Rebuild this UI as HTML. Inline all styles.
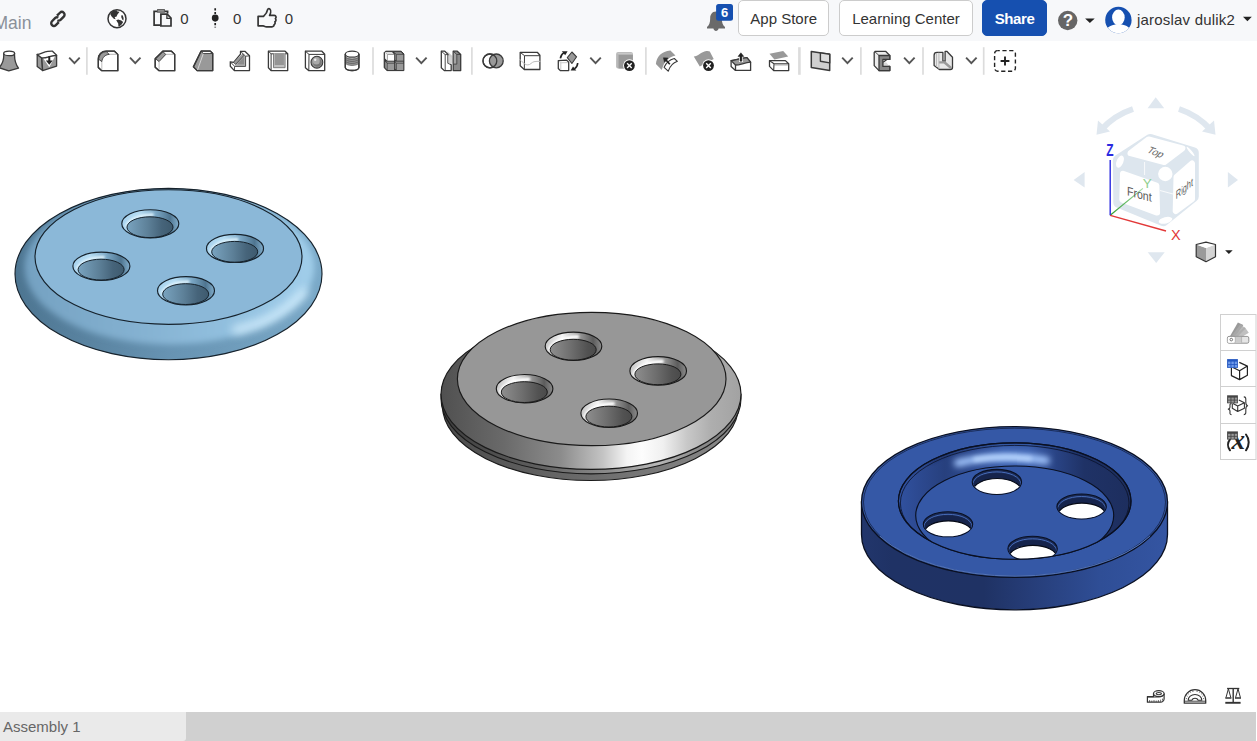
<!DOCTYPE html>
<html><head><meta charset="utf-8">
<style>
html,body{margin:0;padding:0;}
body{width:1257px;height:741px;overflow:hidden;background:#fff;font-family:"Liberation Sans",sans-serif;position:relative;}
#hdr{position:absolute;left:0;top:0;width:1257px;height:41px;background:#f7f8fa;}
#tb{position:absolute;left:0;top:41px;width:1257px;height:40px;background:#fff;}
#bot{position:absolute;left:0;top:712px;width:1256px;height:29px;background:#d0d0d0;}
#tab{position:absolute;left:0;top:0;width:186px;height:29px;background:#eaeaea;border-bottom-right-radius:3px;}
#tab span{position:absolute;left:3px;top:6px;font-size:15px;color:#666;}
.t{position:absolute;white-space:nowrap;}
.btn{position:absolute;box-sizing:border-box;border:1px solid #ccc;border-radius:5px;background:#fff;color:#333;font-size:15px;text-align:center;}
svg{position:absolute;left:0;top:0;}
</style></head><body>
<div id="hdr"></div>
<div id="tb"></div>
<!--SCENE--><svg width="1257" height="741" viewBox="0 0 1257 741">
<defs>
<filter id="bl3" filterUnits="userSpaceOnUse" x="0" y="80" width="1257" height="640"><feGaussianBlur stdDeviation="3"/></filter>
<filter id="bl2" filterUnits="userSpaceOnUse" x="0" y="80" width="1257" height="640"><feGaussianBlur stdDeviation="2"/></filter>
<filter id="bl1" filterUnits="userSpaceOnUse" x="-40" y="-25" width="80" height="50"><feGaussianBlur stdDeviation="1"/></filter>
<filter id="bl5" filterUnits="userSpaceOnUse" x="0" y="80" width="1257" height="640"><feGaussianBlur stdDeviation="5"/></filter>
<linearGradient id="lbOut" x1="15" y1="0" x2="322" y2="0" gradientUnits="userSpaceOnUse">
<stop offset="0" stop-color="#4d7591"/><stop offset="0.5" stop-color="#6793b2"/><stop offset="1" stop-color="#7aa9c8"/>
</linearGradient>
<linearGradient id="lbIn" x1="15" y1="0" x2="322" y2="0" gradientUnits="userSpaceOnUse">
<stop offset="0" stop-color="#73a0c0"/><stop offset="0.4" stop-color="#84b1d1"/><stop offset="0.7" stop-color="#92c0df"/><stop offset="1" stop-color="#a2cfeb"/>
</linearGradient>
<clipPath id="lbClip"><ellipse cx="168.5" cy="274" rx="153.5" ry="85.7"/></clipPath>
<linearGradient id="lbHole" x1="0" y1="0" x2="1" y2="0">
<stop offset="0" stop-color="#8fbcdb"/><stop offset="0.5" stop-color="#5f8aa8"/><stop offset="1" stop-color="#3f627d"/>
</linearGradient>

<linearGradient id="lbHoleIn" x1="-23" y1="0" x2="23" y2="0" gradientUnits="userSpaceOnUse">
<stop offset="0" stop-color="#79a3bf"/><stop offset="0.45" stop-color="#5d8098"/><stop offset="0.75" stop-color="#46647a"/><stop offset="1" stop-color="#3e5a6e"/>
</linearGradient>
<linearGradient id="lbHoleRim" x1="-28" y1="0" x2="28" y2="0" gradientUnits="userSpaceOnUse">
<stop offset="0" stop-color="#a9d3ee"/><stop offset="0.3" stop-color="#b5dcf3"/><stop offset="0.6" stop-color="#7ba7c5"/><stop offset="0.85" stop-color="#4f7590"/><stop offset="1" stop-color="#7fabc9"/>
</linearGradient>
<clipPath id="lbHoleClip"><ellipse cx="0" cy="0" rx="28.5" ry="14.1"/></clipPath>
<g id="lbHoleG">
<ellipse cx="0" cy="0" rx="28.5" ry="14.1" fill="url(#lbHoleRim)" stroke="#16222c" stroke-width="1.15"/>
<g clip-path="url(#lbHoleClip)"><path d="M-24,2 Q-18,-8 2,-9" fill="none" stroke="#dff3fd" stroke-width="3" stroke-linecap="round" filter="url(#bl1)"/></g>
<ellipse cx="-0.3" cy="3.4" rx="23" ry="10.4" fill="url(#lbHoleIn)" stroke="#16222c" stroke-width="1"/>
</g>

<linearGradient id="gCh" x1="441" y1="0" x2="741" y2="0" gradientUnits="userSpaceOnUse">
<stop offset="0" stop-color="#505050"/><stop offset="0.21" stop-color="#6a6a6a"/><stop offset="0.40" stop-color="#8c8c8c"/><stop offset="0.54" stop-color="#c4c4c4"/><stop offset="0.62" stop-color="#f4f4f4"/><stop offset="0.67" stop-color="#fdfdfd"/><stop offset="0.74" stop-color="#f0f0f0"/><stop offset="0.82" stop-color="#c8c8c8"/><stop offset="0.9" stop-color="#aeaeae"/><stop offset="1" stop-color="#a2a2a2"/>
</linearGradient>
<linearGradient id="gWall" x1="441" y1="0" x2="741" y2="0" gradientUnits="userSpaceOnUse">
<stop offset="0" stop-color="#3c3c3c"/><stop offset="0.3" stop-color="#5c5c5c"/><stop offset="0.55" stop-color="#8a8a8a"/><stop offset="0.72" stop-color="#b8b8b8"/><stop offset="0.85" stop-color="#8c8c8c"/><stop offset="1" stop-color="#7a7a7a"/>
</linearGradient>
<linearGradient id="gLow" x1="441" y1="0" x2="741" y2="0" gradientUnits="userSpaceOnUse">
<stop offset="0" stop-color="#4a4a4a"/><stop offset="0.4" stop-color="#666"/><stop offset="0.75" stop-color="#7c7c7c"/><stop offset="1" stop-color="#8a8a8a"/>
</linearGradient>
<linearGradient id="gHoleIn" x1="-23" y1="0" x2="23" y2="0" gradientUnits="userSpaceOnUse">
<stop offset="0" stop-color="#8e8e8e"/><stop offset="0.45" stop-color="#6e6e6e"/><stop offset="0.8" stop-color="#525252"/><stop offset="1" stop-color="#4a4a4a"/>
</linearGradient>
<linearGradient id="gHoleRim" x1="-28" y1="0" x2="28" y2="0" gradientUnits="userSpaceOnUse">
<stop offset="0" stop-color="#c8c8c8"/><stop offset="0.3" stop-color="#f4f4f4"/><stop offset="0.6" stop-color="#9a9a9a"/><stop offset="0.85" stop-color="#5c5c5c"/><stop offset="1" stop-color="#8a8a8a"/>
</linearGradient>
<g id="gHoleG">
<ellipse cx="0" cy="0" rx="28.3" ry="14.2" fill="url(#gHoleRim)" stroke="#1a1a1a" stroke-width="1.15"/>
<g clip-path="url(#lbHoleClip)"><path d="M-24,3 Q-18,-8 4,-9.5" fill="none" stroke="#ffffff" stroke-width="3.5" stroke-linecap="round" filter="url(#bl1)"/></g>
<ellipse cx="-0.3" cy="3.4" rx="23" ry="10.4" fill="url(#gHoleIn)" stroke="#1a1a1a" stroke-width="1"/>
</g>

<linearGradient id="bWall" x1="861" y1="0" x2="1168" y2="0" gradientUnits="userSpaceOnUse">
<stop offset="0" stop-color="#22366c"/><stop offset="0.1" stop-color="#1f3265"/><stop offset="0.4" stop-color="#1f3264"/><stop offset="0.55" stop-color="#263d78"/><stop offset="0.78" stop-color="#2f4e96"/><stop offset="1" stop-color="#3455a2"/>
</linearGradient>
<linearGradient id="bBowl" x1="898" y1="0" x2="1131" y2="0" gradientUnits="userSpaceOnUse">
<stop offset="0" stop-color="#3152a0"/><stop offset="0.08" stop-color="#2d4a92"/><stop offset="0.2" stop-color="#27407e"/><stop offset="0.32" stop-color="#2d4a90"/><stop offset="0.45" stop-color="#3a5eac"/><stop offset="0.56" stop-color="#3a5eac"/><stop offset="0.68" stop-color="#294384"/><stop offset="0.8" stop-color="#1f3266"/><stop offset="1" stop-color="#1d2e5e"/>
</linearGradient>
<clipPath id="bRecClip"><ellipse cx="1014.7" cy="501" rx="116.3" ry="58.2"/></clipPath>
<g id="bHoleG">
<ellipse cx="0" cy="0" rx="24.7" ry="12.5" fill="#1a2a56" stroke="#0a1022" stroke-width="1.1"/>
<clipPath id="bHoleClip"><ellipse cx="0" cy="0" rx="24.2" ry="12"/></clipPath>
<g clip-path="url(#bHoleClip)">
<ellipse cx="0" cy="1.6" rx="23.6" ry="11.6" fill="none" stroke="#4d74c4" stroke-width="1" opacity="0.9"/>
<ellipse cx="0" cy="3.4" rx="24" ry="12" fill="#16234a" stroke="none" opacity="0.85"/>
<ellipse cx="0.3" cy="9.2" rx="24.2" ry="12.6" fill="#ffffff" stroke="#060a16" stroke-width="1.2"/>
</g>
</g>
</defs>
<!-- light blue button -->
<g id="lb">
<ellipse cx="168.5" cy="274" rx="153.5" ry="85.7" fill="url(#lbOut)"/>
<g clip-path="url(#lbClip)">
<ellipse cx="169.5" cy="267" rx="145" ry="77.5" fill="url(#lbIn)" filter="url(#bl3)"/>
<path d="M236,330 Q277,322 304,292" fill="none" stroke="#d6effd" stroke-width="8" stroke-linecap="round" filter="url(#bl5)" opacity="0.95"/>
</g>
<ellipse cx="168.5" cy="274" rx="153.5" ry="85.7" fill="none" stroke="#16222c" stroke-width="1.15"/>
<ellipse cx="168.5" cy="257" rx="133.5" ry="67.3" fill="#8bb8d8" stroke="#16222c" stroke-width="1.15"/>
<use href="#lbHoleG" x="150.3" y="223.8"/>
<use href="#lbHoleG" x="235.0" y="248.4"/>
<use href="#lbHoleG" x="101.4" y="266.2"/>
<use href="#lbHoleG" x="186.0" y="290.7"/>
</g>
<!-- gray button -->
<g id="gb">
<ellipse cx="590.5" cy="406" rx="148" ry="74.5" fill="url(#gLow)" stroke="#1a1a1a" stroke-width="1.15"/>
<path d="M441,394.2 L441,398.6 A150,75.2 0 0 0 741,398.6 L741,394.2 Z" fill="url(#gWall)" stroke="#1a1a1a" stroke-width="1.15"/>
<ellipse cx="591" cy="394.2" rx="150" ry="75.2" fill="url(#gCh)" stroke="#1a1a1a" stroke-width="1.15"/>
<ellipse cx="591.7" cy="379" rx="134.3" ry="66.7" fill="#979797" stroke="#1a1a1a" stroke-width="1.15"/>
<use href="#gHoleG" x="573.5" y="346.3"/>
<use href="#gHoleG" x="658.2" y="370.9"/>
<use href="#gHoleG" x="524.6" y="388.7"/>
<use href="#gHoleG" x="609.2" y="413.2"/>
</g>
<!-- blue button -->
<g id="bb">
<path d="M861.5,502 L861.5,534.4 A153,75.4 0 0 0 1167.5,534.4 L1167.5,502 Z" fill="url(#bWall)" stroke="#0a1022" stroke-width="1.3"/>
<ellipse cx="1014.5" cy="502" rx="153" ry="75.4" fill="#3558a6" stroke="#0a1022" stroke-width="1.3"/>
<ellipse cx="1014.5" cy="502.2" rx="151" ry="74" fill="none" stroke="#0e1836" stroke-width="0.8" opacity="0.85"/>
<path d="M880,535 A153,75.4 0 0 0 1150,535" fill="none" stroke="#6f94dc" stroke-width="0.9" opacity="0.75" transform="translate(0,1.2)"/>
<ellipse cx="1014.7" cy="501" rx="116.3" ry="58.2" fill="url(#bBowl)" stroke="#0a1022" stroke-width="1.15"/>
<g clip-path="url(#bRecClip)">
<ellipse cx="1014.7" cy="503" rx="114.3" ry="57.6" fill="none" stroke="#0b1226" stroke-width="0.8"/>
<path d="M930,470 A110,55 0 0 1 1105,472" fill="none" stroke="#1a2a58" stroke-width="4" filter="url(#bl2)" opacity="0.8" transform="translate(0,-9.5)"/>
<path d="M958,463 A108,52 0 0 1 1046,460.5" fill="none" stroke="#a4c8ff" stroke-width="7.5" stroke-linecap="round" filter="url(#bl3)" opacity="1"/>
<path d="M975,459.5 A108,52 0 0 1 1030,458.7" fill="none" stroke="#c0dcff" stroke-width="4" stroke-linecap="round" filter="url(#bl2)" opacity="0.9"/>
<ellipse cx="1014.7" cy="515.5" rx="99" ry="49.5" fill="#3558a6" stroke="#0a1022" stroke-width="1.15"/>
<use href="#bHoleG" x="996.9" y="481.9"/>
<use href="#bHoleG" x="1081.6" y="506.5"/>
<use href="#bHoleG" x="948.0" y="524.3"/>
<use href="#bHoleG" x="1032.6" y="548.8"/>
</g>
<ellipse cx="1014.7" cy="501" rx="116.3" ry="58.2" fill="none" stroke="#0a1022" stroke-width="1.15"/>
</g>
</svg>
<!--/SCENE-->
<!--HDRITEMS--><div class="t" id="main" style="left:-6.5px;top:13px;font-size:17.5px;color:#8a9099;">Main</div>
<svg width="1257" height="41" viewBox="0 0 1257 41" style="top:0;left:0">
<!-- link icon -->
<g transform="translate(57.9,18.9) rotate(-45)" fill="none" stroke="#333" stroke-width="2.4">
<path d="M-1.6,2.9 L-5.8,2.9 A2.7,2.7 0 0 1 -5.8,-2.5 L-1.2,-2.5 A2.7,2.7 0 0 1 1.3,-0.6"/>
<path d="M1.6,-2.9 L5.8,-2.9 A2.7,2.7 0 0 1 5.8,2.5 L1.2,2.5 A2.7,2.7 0 0 1 -1.3,0.6"/>
</g>
<!-- globe -->
<g>
<circle cx="117" cy="18.7" r="9" fill="#fff" stroke="#333" stroke-width="1.5"/>
<path d="M110.3,14.2 C110.8,12.6 112,11.2 113.6,10.5 L116.6,10.2 L117.4,11.6 L119.6,11.8 L117.6,14.2 L116.4,16.8 L114.6,17 L115.6,19.3 L113.8,18.8 L111.6,16.6 Z" fill="#333"/>
<path d="M116.2,20.2 L118.2,19.6 L121.3,20.4 L123.2,22 L121.6,24.4 L119.6,26.3 L118.4,26.2 L118.2,23.4 Z" fill="#333"/>
<path d="M121.6,15 L122.8,15.4 L123.6,18 L123.4,20.6 L122.2,19.4 L121.2,17 Z" fill="#333"/>
</g>
<!-- clipboard -->
<g fill="none" stroke="#333" stroke-width="1.7" stroke-linejoin="miter">
<path d="M160.5,25.2 L154.1,25.2 L154.1,11.3 L157.3,11.3 M164.6,11.3 L167.6,11.3 L167.6,13.5"/>
<rect x="157.6" y="9.6" width="6.8" height="2.6" fill="#999" stroke="#555" stroke-width="1"/>
<path d="M160.9,14.1 L167.2,14.1 L171,18 L171,26 L160.9,26 Z" fill="#f7f8fa"/>
<path d="M166.9,14.3 L166.9,18.3 L170.8,18.3" stroke-width="1.3"/>
</g>
<!-- version dot -->
<g>
<line x1="215.2" y1="8.3" x2="215.2" y2="27.5" stroke="#222" stroke-width="1.7" stroke-dasharray="2.1,1.6"/>
<circle cx="215.2" cy="17.9" r="3.4" fill="#222"/>
</g>
<!-- thumb -->
<path d="M258.1,16.4 L263.5,16.4 C265.5,14.5 267.3,12 267.6,9.6 C267.8,8.6 269,8.4 269.9,9.2 C271.2,10.4 270.6,13.6 269.6,15.4 L274.2,15.4 C276.2,15.4 276.6,17.6 275.4,18.6 C276.4,19.6 276,21.2 274.9,21.8 C275.5,22.9 275,24.2 274,24.7 C274.3,26 273.2,26.8 272,26.8 L266.6,26.8 C265,26.8 264.2,26 263.2,25.8 L258.1,25.8 Z" fill="none" stroke="#333" stroke-width="1.7" stroke-linejoin="round"/>
<!-- bell -->
<path d="M716,11.5 C711.8,11.5 710.2,15 710.2,18 C710.2,22.5 709.3,25 707,27 L707,28.6 L713.4,28.6 C713.7,30.3 714.8,31 716,31 C717.2,31 718.3,30.3 718.6,28.6 L725,28.6 L725,27 C722.7,25 721.8,22.5 721.8,18 C721.8,15 720.2,11.5 716,11.5 Z" fill="#6a6a6a"/>
<rect x="716.1" y="4" width="16.9" height="16.8" rx="2.5" fill="#1650b0"/>
<!-- help -->
<circle cx="1067.7" cy="20.5" r="9.7" fill="#666"/>
<path d="M1082.6,18.2 L1092.2,18.2 L1087.4,22.8 Z" fill="#222" transform="translate(2.5,0.3)"/>
<!-- avatar -->
<clipPath id="avc"><circle cx="1118.4" cy="20" r="13.2"/></clipPath>
<circle cx="1118.4" cy="20" r="13.2" fill="#1650b0"/>
<g clip-path="url(#avc)" fill="#fff">
<ellipse cx="1118.4" cy="17.4" rx="6.3" ry="7.8"/>
<path d="M1104,36 C1104,28 1111,24.2 1118.4,24.2 C1125.8,24.2 1132.8,28 1132.8,36 Z"/>
</g>
<path d="M1243,16.8 L1251.8,16.8 L1247.4,21.2 Z" fill="#222"/>
</svg>
<div class="t" style="left:180.3px;top:10px;font-size:15px;color:#333;">0</div>
<div class="t" style="left:232.9px;top:10px;font-size:15px;color:#333;">0</div>
<div class="t" style="left:284.7px;top:10px;font-size:15px;color:#333;">0</div>
<div class="t" style="left:716.1px;top:4.6px;width:16.9px;text-align:center;font-size:13px;font-weight:bold;color:#fff;">6</div>
<div class="btn" style="left:737.9px;top:0;width:91.6px;height:36px;line-height:35px;">App Store</div>
<div class="btn" style="left:839.2px;top:0;width:133.6px;height:36px;line-height:35px;">Learning Center</div>
<div class="btn" style="left:982px;top:0;width:65px;height:36px;line-height:35px;background:#1650b0;border-color:#1650b0;color:#fff;font-weight:bold;letter-spacing:-0.4px;">Share</div>
<div class="t" style="left:1062.7px;top:10.6px;font-size:17px;font-weight:bold;color:#fff;width:10px;text-align:center;">?</div>
<div class="t" style="left:1137px;top:10.5px;font-size:15px;color:#333;letter-spacing:0.2px;">jaroslav dulik2</div>
<!--/HDRITEMS-->
<!--TOOLBAR--><svg width="1257" height="90" viewBox="0 0 1257 90" style="top:0;left:0" stroke-linejoin="round">
<g stroke="#dcdcdc" stroke-width="1.7">
<line x1="86.9" y1="47.2" x2="86.9" y2="74.8"/><line x1="373" y1="47.2" x2="373" y2="74.8"/><line x1="471.9" y1="47.2" x2="471.9" y2="74.8"/><line x1="645.9" y1="47.2" x2="645.9" y2="74.8"/><line x1="799.4" y1="47.2" x2="799.4" y2="74.8" stroke-width="2.6"/><line x1="860.9" y1="47.2" x2="860.9" y2="74.8"/><line x1="923" y1="47.2" x2="923" y2="74.8"/><line x1="983.7" y1="47.2" x2="983.7" y2="74.8"/>
</g>
<g fill="none" stroke="#555" stroke-width="1.9" stroke-linecap="butt" stroke-linejoin="miter">
<path d="M69.2,57.6 l5.25,5.5 l5.25,-5.5"/><path d="M130,57.6 l5.25,5.5 l5.25,-5.5"/><path d="M416.1,57.6 l5.25,5.5 l5.25,-5.5"/><path d="M590.3,57.6 l5.25,5.5 l5.25,-5.5"/><path d="M842.2,57.6 l5.25,5.5 l5.25,-5.5"/><path d="M904.1,57.6 l5.25,5.5 l5.25,-5.5"/><path d="M966.1,57.6 l5.25,5.5 l5.25,-5.5"/>
</g>
<g stroke="#3a3a3a" stroke-width="1.3" fill="#fff">
<!-- 1 loft -->
<path d="M3.7,53.4 C4.2,60 2,64.5 -0.8,67.7 L8.75,70.9 L18.5,68.2 C15.8,64.5 14.2,60 14.6,53.4 Z" fill="#999"/>
<ellipse cx="9.15" cy="53.4" rx="5.4" ry="2.2"/>
<!-- 2 box arrow -->
<path d="M37.2,54.5 L41.8,57.9 L42.6,70.6 L37.2,66.5 Z" fill="#999"/>
<path d="M41.8,57.9 L56.6,55.3 L56.6,66.1 L42.6,70.6 Z" fill="#999"/>
<path d="M43.2,58.2 L55,56.2 L49.3,67.2 Z" fill="#fff" stroke="none"/>
<path d="M37.2,54.5 C40.5,54.3 43.5,51.8 47.7,51.4 C50,51.2 51.2,51.1 52.5,51.2 L56.6,55.3 C53.5,55.2 51,55.8 48.5,56.8 C46,57.7 44,58.2 41.8,57.9 Z"/>
<path d="M48.3,56.2 L50.3,56.2 L50.3,60.5 L52.8,60.5 L49.3,64.8 L45.8,60.5 L48.3,60.5 Z" fill="#222" stroke="none"/>
<!-- 3 fillet -->
<path d="M98.3,67.5 L98.3,59 C98.3,54.5 101.5,51.2 106.3,51.2 L114.5,51.2 L117.8,54.4 L117.8,70.7 L101.8,70.7 Z"/>
<path d="M101.8,70 L101.8,61.3 M108.9,54.4 L117.3,54.4" fill="none" stroke="#c4c4c4" stroke-width="1.1"/>
<path d="M98.6,59.2 C99.2,54.6 102.3,51.9 106.4,51.6 L109.2,54.4 C105.2,54.7 102.3,57.4 101.8,61.6 Z" fill="#999" stroke-width="0.9"/>
<path d="M98.3,67.5 L98.3,59 C98.3,54.5 101.5,51.2 106.3,51.2 L114.5,51.2 L117.8,54.4 L117.8,70.7 L101.8,70.7 Z" fill="none"/>
<!-- 4 chamfer -->
<path d="M155.2,67.3 L155.2,58.8 L162.8,51.2 L171.5,51.2 L174.7,54.4 L174.7,70.7 L159.1,70.7 Z"/>
<path d="M159.1,70 L159.1,61.3 M165.6,54.4 L174.2,54.4" fill="none" stroke="#c4c4c4" stroke-width="1.1"/>
<path d="M155.6,58.9 L162.9,51.6 L165.8,54.4 L159.1,61.5 Z" fill="#999" stroke-width="0.9"/>
<path d="M155.2,67.3 L155.2,58.8 L162.8,51.2 L171.5,51.2 L174.7,54.4 L174.7,70.7 L159.1,70.7 Z" fill="none"/>
<!-- 5 draft -->
<path d="M193.4,66.9 L201,51.2 L210.3,51.2 L212.7,53.5 L212.7,70.6 L197.2,70.6 Z" fill="#999"/>
<path d="M201,51.2 L210.3,51.2 L212.7,53.5 L203.4,53.6 Z" stroke-width="0.9"/>
<path d="M197.5,70 L203.2,54" fill="none" stroke="#e4e4e4" stroke-width="0.8"/>
<path d="M193.4,66.9 L201,51.2 L210.3,51.2 L212.7,53.5 L212.7,70.6 L197.2,70.6 Z" fill="none"/>
<!-- 6 rib -->
<path d="M230.3,61.8 L233.6,62.4 L240.5,54.2 L240.5,51.3 L244.9,51.3 L249.5,55.7 L249.5,70.6 L234.4,70.6 L230.3,66.2 Z"/>
<path d="M235.3,64.6 L243.8,55.2 L245.6,56.2 L245.6,66.4 L235.3,66.4 Z" fill="#b4b4b4" stroke="none"/>
<path d="M237.5,63.5 L244.2,56.6 L244.2,64.6 L237.5,64.6 Z" fill="#8c8c8c" stroke="none"/>
<path d="M233.6,62.4 L235.6,64.4 L244,55.4 L242.2,53.9" fill="#999" stroke-width="0.8"/>
<path d="M240.5,51.3 L245.6,56.2 L249.5,55.9 M245.6,56.2 L245.6,66.4 L234.6,66.4 L234.4,70.6 M234.6,66.4 L230.3,61.8" fill="none" stroke-width="0.9"/>
<!-- 7 shell -->
<path d="M268.4,51.2 L285.1,51.2 L287.7,53.8 L287.7,70.6 L271.1,70.6 L268.4,67.7 Z"/>
<path d="M268.4,51.2 L271.1,53.8 L287.7,53.8 M271.1,53.8 L271.1,70.6" fill="none" stroke-width="1"/>
<rect x="273.5" y="53.2" width="11.6" height="14.5" fill="#c0c0c0" stroke="none"/>
<rect x="274.7" y="53.2" width="9.2" height="11.8" fill="#959595" stroke="none"/>
<path d="M273.5,53.8 L273.5,67.7 L285.1,67.7 L285.1,53.8" fill="none" stroke="#666" stroke-width="0.8"/>
<!-- 8 hole -->
<path d="M305.4,51.2 L321.9,51.2 L324.7,54.2 L324.7,70.6 L308.6,70.6 L305.4,67.7 Z"/>
<path d="M305.4,51.2 L309,54.4 L324.7,54.4 M309,54.4 L308.8,70.6" fill="none" stroke-width="1"/>
<circle cx="316.9" cy="62.2" r="5.9" fill="#999" stroke-width="1.1"/>
<circle cx="317.3" cy="62.4" r="4.4" fill="#777" stroke="none"/>
<circle cx="316.3" cy="60.9" r="3.5" fill="#aaa" stroke="none"/>
<circle cx="315.2" cy="59.8" r="1.2" fill="#eee" stroke="none"/>
<!-- 9 thread -->
<path d="M345.3,54.2 L345.3,67.4 A6.8,3.1 0 0 0 358.9,67.4 L358.9,54.2 Z"/>
<path d="M345.3,55.5 L345.3,62.6 A6.8,2.8 0 0 0 358.9,62.6 L358.9,55.5 A6.8,2.8 0 0 1 345.3,55.5 Z" fill="#999" stroke="none"/>
<g fill="none" stroke="#555" stroke-width="0.8"><path d="M345.3,56.6 A6.8,2.8 0 0 0 358.9,56.6"/><path d="M345.3,58.6 A6.8,2.8 0 0 0 358.9,58.6"/><path d="M345.3,60.6 A6.8,2.8 0 0 0 358.9,60.6"/><path d="M345.3,62.6 A6.8,2.8 0 0 0 358.9,62.6"/></g>
<ellipse cx="352.1" cy="54.2" rx="6.8" ry="3"/>
<path d="M345.3,54.2 L345.3,67.4 A6.8,3.1 0 0 0 358.9,67.4 L358.9,54.2" fill="none"/>
<!-- 10 pattern -->
<path d="M384.2,52.6 L385.6,51.2 L401.2,51.2 L403.9,54 L403.9,70.6 L387,70.6 L384.2,67.8 Z" fill="#333" stroke="#333" stroke-width="1"/>
<g stroke="none">
<path d="M385,52 L392,52 L394.3,54.5 L387.6,54.5 Z" fill="#ddd"/><path d="M385,52 L387.6,54.5 L387.6,60.9 L385,58.4 Z" fill="#eee"/><rect x="387.9" y="54.8" width="6.2" height="5.9" fill="#fff"/>
<path d="M394,52 L401,52 L403.3,54.5 L396.6,54.5 Z" fill="#858585"/><path d="M394.6,53 L396.4,54.8 L396.4,60.7 L394.6,59.5 Z" fill="#777"/><rect x="396.8" y="55" width="6.5" height="5.7" fill="#9a9a9a"/>
<path d="M385,61.5 L387.6,63.8 L387.6,70 L385,67.5 Z" fill="#858585"/><path d="M385.6,61.6 L393.8,61.6 L394.2,63.3 L387.8,63.3 Z" fill="#858585"/><rect x="387.9" y="63.6" width="6.2" height="6.4" fill="#9a9a9a"/>
<path d="M394.8,61.6 L403.2,61.6 L403.2,63.3 L396.6,63.3 Z" fill="#858585"/><path d="M394.8,62 L396.4,63.6 L396.4,70 L394.8,68.5 Z" fill="#777"/><rect x="396.8" y="63.6" width="6.5" height="6.4" fill="#9a9a9a"/>
</g>
<!-- 11 mirror -->
<path d="M447.2,51.2 L452.4,56.1 L452.4,63.3 L449.2,64.1 L447.5,62.5 Z" fill="#ccc" stroke="none"/>
<path d="M441.3,51.2 L444.8,51.2 L448,54.4 L448,62.9 L451.2,64.7 L451.2,70.6 L444.3,70.6 L441.3,67.7 Z"/>
<path d="M441.3,51.2 L445.2,54.6 L445.2,70.6 M445.2,54.6 L448,54.6" fill="none" stroke-width="0.9"/>
<path d="M448.2,55 L452.4,58.5 L452.4,63.3 L450,64 L448.2,63 Z" fill="#d4d4d4" stroke="none" opacity="0.9"/>
<path d="M453.2,51.2 L457.3,51.2 L460.7,54.5 L460.7,70.6 L453.2,70.6 Z" fill="#8a8a8a"/>
<path d="M453.8,52 L456.8,54.5 L456.8,64.1 L453.8,64.1 Z" fill="#a4a4a4" stroke="none"/>
<path d="M453.2,51.2 L456.8,54.5 L456.8,64.1 L453.6,64.1 M456.8,54.5 L460.7,54.5" fill="none" stroke-width="0.8"/>
<!-- 12 boolean -->
<circle cx="489.9" cy="60.9" r="6.9"/>
<circle cx="496.3" cy="60.9" r="6.9" fill="#999"/>
<circle cx="489.9" cy="60.9" r="6.9" fill="none"/>
<!-- 13 split -->
<path d="M520.2,52.3 L537.3,52.3 L539.9,55.2 L539.9,69.5 L524.3,69.5 L520.2,65.8 Z"/>
<path d="M520.2,52.3 L524.5,55.7 L539.9,55.7 M524.5,55.7 L524.3,69.5" fill="none" stroke-width="1"/>
<path d="M519.2,59.3 C521,60 521.5,61.5 522.6,62.1 C524,63.5 525.5,64.9 527.8,64.9 C530.5,64.9 531.5,62.3 534,61.7 C536,61.2 538,61.5 540.6,61.3" fill="none" stroke="#bdbdbd" stroke-width="1"/>
<!-- 14 transform -->
<path d="M558.3,60.6 L566.7,60.2 L568.7,62.1 L568.7,70.6 L560.3,70.6 L558.3,68.5 Z"/>
<path d="M559,61.3 L560.8,62.8 L568,62.6 M560.8,62.8 L560.8,70" fill="none" stroke="#c4c4c4" stroke-width="0.9"/>
<path d="M571.9,52 L576.6,56.8 L571.9,63.5 L567.3,57.7 Z" fill="#999" stroke-width="1.1"/>
<path d="M560.4,58.4 C560.6,55.8 562,53.8 564,52.6" fill="none" stroke="#222" stroke-width="1.6"/>
<path d="M561.8,51.3 L567.6,51.3 L565.2,55.2 Z" fill="#222" stroke="none"/>
<path d="M577.7,63 C577.6,65.4 576.3,67.5 574.4,68.8" fill="none" stroke="#222" stroke-width="1.6"/>
<path d="M570.6,70.6 L576.3,70.6 L573,66.6 Z" fill="#222" stroke="none"/>
<!-- 15 delete part -->
<g stroke="none">
<path d="M616.1,54 Q616.1,52 618.1,52 L630.9,52 Q632.9,52 632.9,54 L632.9,68.5 L618.1,68.5 Q616.1,68.5 616.1,66.5 Z" fill="#b8b8b8"/>
<rect x="618.6" y="54.4" width="14.3" height="14.1" fill="#999"/>
<path d="M616.9,52.8 L632.2,52.8 L632.9,54.4 L618.6,54.4 Z" fill="#c8c8c8"/>
<circle cx="629.4" cy="65.6" r="6.3" fill="#fff"/>
<circle cx="629.4" cy="65.6" r="5.4" fill="#222"/>
<path d="M627.1,63.3 L631.7,67.9 M631.7,63.3 L627.1,67.9" stroke="#fff" stroke-width="1.4" fill="none"/>
</g>
<!-- 16 modify fillet -->
<path d="M655.9,64 C656.5,56.5 661.5,51.3 670.4,50.4 L675.5,55.5 C668.5,57 664,61.5 661.8,70 Z" fill="#999" stroke="none"/>
<path d="M664.1,67.3 C666,63 669.5,59.8 674.3,58.5 L677.4,61.3 C673,62.8 670,66 668.2,71.2 Z" stroke-width="1.1"/>
<path d="M669.8,64.2 L665.6,59.6" fill="none" stroke="#222" stroke-width="1.7"/>
<path d="M663.4,57.8 L668.2,58 L664.5,62.3 Z" fill="#222" stroke="#222" stroke-width="0.5"/>
<!-- 17 delete face -->
<path d="M693.8,56.4 C698,56.3 701,52 706.3,51 C708,50.8 709,51 709.8,51.6 L713.7,59 L699.8,66.6 Z" fill="#999" stroke="none"/>
<circle cx="708.5" cy="65.6" r="6.3" fill="#fff" stroke="none"/>
<circle cx="708.5" cy="65.6" r="5.4" fill="#222" stroke="none"/>
<path d="M706.2,63.3 L710.8,67.9 M710.8,63.3 L706.2,67.9" stroke="#fff" stroke-width="1.4" fill="none"/>
<!-- 18 move face -->
<path d="M731.1,60.6 L746.9,57.7 L750.6,62.1 L750.6,70.4 L735.5,70.4 L731.1,66.4 Z"/>
<path d="M731.1,60.6 C735,60.5 738,58.5 746.9,57.7 L750.6,62.1 C744,62.8 740,65 735.5,65 Z" fill="#999"/>
<path d="M735.5,65 L735.5,70.4" fill="none"/>
<path d="M739,56.8 L736.6,56.8 L740.9,51.5 L745.2,56.8 L742.9,56.8 L742.9,62 L739,62 Z" fill="#fff" stroke="none"/>
<path d="M740,56.4 L738,56.4 L740.9,52.8 L743.8,56.4 L741.9,56.4 L741.9,61.2 L740,61.2 Z" fill="#222" stroke="#222" stroke-width="0.5"/>
<!-- 19 offset surface -->
<path d="M769.5,53.8 L783.2,51.1 L788.2,56.4 L774.4,59.4 Z" fill="#999" stroke="none"/>
<path d="M769.5,60.6 L785.4,60.6 L788.7,63.7 L788.7,70.6 L773.7,70.6 L769.5,66.4 Z"/>
<rect x="774.5" y="64.2" width="13.6" height="1.6" fill="#ccc" stroke="none"/>
<path d="M769.5,60.6 L774,63.8 L788.7,63.8 M774,63.8 L773.7,70.6" fill="none" stroke-width="1.1"/>
<!-- 20 plane -->
<path d="M811.3,51.4 L829.7,54.2 L829.7,70.5 L811.3,67.5 Z" fill="#d0d0d0" stroke-width="1.5"/>
<path d="M820.4,52.9 L820.4,61.2 L829.7,62.9 L829.7,54.2 Z" fill="#dedede" stroke-width="1.4"/>
<!-- 21 frame -->
<path d="M874.2,52.4 L875.3,51.3 L885.6,51.3 L889.8,55.5 L889.8,59.4 L886.8,59.4 L882.9,62.5 L882.9,66.4 L889.8,66.4 L889.8,70.6 L879,70.6 L874.2,65.6 Z" fill="#ececec"/>
<path d="M882.9,66.4 L882.9,62.6 L886.3,62.6 L889.5,66.4 Z" fill="#d8d8d8" stroke="none"/>
<path d="M879,55.5 L889.8,55.5 L889.8,59.4 L882.9,59.4 L882.9,66.4 L889.8,66.4 L889.8,70.6 L879,70.6 Z" fill="#888"/>
<path d="M875,51.8 L879,55.5" fill="none" stroke-width="0.9"/>
<!-- 22 sheet metal -->
<path d="M934.1,55.2 Q934.1,52.4 937,52.4 L942.9,52.4 L942.9,61.2 L945.1,61.2 L945.1,51.3 L946.8,51.3 L952.5,57.3 L952.5,67.5 Q952.5,69.5 950.3,69.5 L939.4,69.5 L934.1,65.6 Z" fill="#e8e8e8"/>
<path d="M938.9,61.2 L945.1,61.2 L952.1,67.3 L950.3,69.1 L943.8,63.4 L938.9,63.4 Z" fill="#999" stroke="none"/>
<path d="M936.5,53 L936.5,67 M938.9,52.6 L938.9,69" fill="none" stroke="#b4b4b4" stroke-width="0.9"/>
<!-- 23 dashed plus -->
<rect x="994.6" y="50.6" width="20.8" height="20.6" rx="3" fill="none" stroke="#222" stroke-width="1.4" stroke-dasharray="4.2,2.6" stroke-dashoffset="2"/>
<path d="M1000.6,61 L1009.4,61 M1005,56.6 L1005,65.4" stroke="#222" stroke-width="1.9" fill="none"/>
</g>
</svg>
<!--/TOOLBAR-->
<!--RIGHT--><svg width="1257" height="741" viewBox="0 0 1257 741" style="top:0;left:0">
<defs>
<linearGradient id="yfade" x1="1110" y1="215" x2="1143" y2="188" gradientUnits="userSpaceOnUse"><stop offset="0" stop-color="#2a9a2a"/><stop offset="0.3" stop-color="#4fb04f"/><stop offset="1" stop-color="#a8dca8"/></linearGradient>
</defs>
<!-- view nav arrows -->
<g fill="#dfe7ef">
<path d="M1155.7,97.3 L1164.2,108.2 L1147.6,108.2 Z"/>
<path d="M1156.2,263 L1164.7,252.3 L1147.7,252.3 Z"/>
<path d="M1073.6,179.9 L1084.6,172 L1084.6,187.6 Z"/>
<path d="M1238,180 L1227.9,172 L1227.9,187.6 Z"/>
</g>
<g fill="none" stroke="#dfe7ef" stroke-width="6">
<path d="M1133,109 A74,74 0 0 0 1101,130"/>
<path d="M1179,109 A74,74 0 0 1 1211,130"/>
</g>
<g fill="#dfe7ef">
<path d="M1096.5,134.8 L1098,120.5 L1110,131.5 Z"/>
<path d="M1215.5,134.8 L1214,120.5 L1202,131.5 Z"/>
</g>
<!-- cube body -->
<path d="M1118.4,160.2 L1150.4,139.4 L1193.3,152.7 L1193.3,196.4 L1163.3,220.6 L1118.8,202.4 Z" fill="#dde6ee" stroke="#dde6ee" stroke-width="11" stroke-linejoin="round"/>
<!-- faces -->
<g fill="#fff" stroke="#fff" stroke-width="6" stroke-linejoin="round">
<path d="M1130.5,153.2 L1148.5,139.5 L1182.4,148.3 L1164.3,162.1 Z"/>
<path d="M1123,173.8 L1156.4,185.6 L1157.1,212.6 L1122.3,199.7 Z"/>
<path d="M1176.5,177 L1192,163.4 L1192,199.2 L1175.7,211.1 Z"/>
</g>
<g fill="#fff">
<circle cx="1165.3" cy="174" r="7.2"/>
<ellipse cx="1120" cy="161.6" rx="3.4" ry="6.4" transform="rotate(22 1120 161.6)"/>
<ellipse cx="1165.5" cy="220.3" rx="7" ry="3.2" transform="rotate(-14 1165.5 220.3)"/>
<ellipse cx="1190.6" cy="151.5" rx="1.2" ry="6" transform="rotate(-40 1190.6 151.5)"/>
</g>
<path d="M1144.6,162 L1144.6,175" stroke="#fff" stroke-width="0.8"/>
<path d="M1160,190.5 L1173,194" stroke="#fff" stroke-width="0.8"/>
<!-- axes -->
<line x1="1110.2" y1="215.3" x2="1142.9" y2="188.4" stroke="url(#yfade)" stroke-width="1.2"/>
<line x1="1110.2" y1="215.3" x2="1110.2" y2="160" stroke="#2a2ae0" stroke-width="1.4"/>
<line x1="1110.2" y1="215.3" x2="1166" y2="231" stroke="#e23838" stroke-width="1.4"/>
<text transform="translate(1110,155.8) scale(0.8,1.08)" font-family="Liberation Sans, sans-serif" font-size="15" font-weight="bold" fill="#2a2ae0" text-anchor="middle">Z</text>
<text x="1175.8" y="240.3" font-family="Liberation Sans, sans-serif" font-size="14.5" fill="#e23838" text-anchor="middle">X</text>
<text x="1147.3" y="187.5" font-family="Liberation Sans, sans-serif" font-size="13.5" fill="#8fd08f" text-anchor="middle">Y</text>
<text transform="translate(1139.3,198.6) skewY(15) scale(0.84,1)" font-family="Liberation Sans, sans-serif" font-size="12.6" fill="#5a5a5a" text-anchor="middle">Front</text>
<text transform="translate(1153.5,155) rotate(21) skewX(-20)" font-family="Liberation Sans, sans-serif" font-size="10" fill="#666" text-anchor="middle">Top</text>
<text transform="translate(1184.4,192.4) skewY(-40) scale(0.64,1)" font-family="Liberation Sans, sans-serif" font-size="11.5" fill="#606060" text-anchor="middle">Right</text>
<!-- small cube icon -->
<g stroke-linejoin="round">
<path d="M1196.2,244.5 L1206,247.9 L1206,261.7 L1196.2,256.7 Z" fill="#9a9a9a"/>
<path d="M1206,247.9 L1215.5,244.5 L1215.5,256.7 L1206,261.7 Z" fill="#d4d4d4"/>
<path d="M1196.2,244.5 L1206,242.2 L1215.5,244.5 L1206,247.9 Z" fill="#fff"/>
<path d="M1206,242.2 L1215.5,244.5 L1215.5,256.7 L1206,261.7 L1196.2,256.7 L1196.2,244.5 Z" fill="none" stroke="#333" stroke-width="1.2"/>
</g>
<path d="M1225.1,250.2 L1232.7,250.2 L1228.9,253.9 Z" fill="#222"/>
<!-- right panel -->
<g>
<rect x="1220.5" y="314.5" width="35.5" height="145" fill="#fff" stroke="#d0d0d0" stroke-width="1"/>
<path d="M1220.5,350.5 H1256 M1220.5,386.5 H1256 M1220.5,423.5 H1256" stroke="#d0d0d0" stroke-width="1"/>
</g>

<!-- panel icon 1: appearance -->
<g>
<path d="M1230.1,335.9 L1237.9,322.4 L1243.3,325.1 L1235.5,336.2 Z" fill="#999"/>
<path d="M1233.9,335.9 L1244.7,327.1 L1248.8,332.7 L1243,336.2 Z" fill="#c0c0c0"/>
<path d="M1231.5,336 L1240.5,324 L1245.5,328.5 L1238,336.2 Z" fill="#aaa" opacity="0.8"/>
<rect x="1227.4" y="336.4" width="21.4" height="6.8" rx="1.6" fill="#e6e6e6" stroke="#888" stroke-width="0.9"/>
<rect x="1235.2" y="336.9" width="6.4" height="5.8" fill="#ccc"/>
<path d="M1235.2,336.9 V342.7 M1241.6,336.9 V342.7" stroke="#aaa" stroke-width="0.7"/>
<rect x="1227.8" y="336.9" width="6.8" height="5.8" rx="1.2" fill="#fff"/>
<circle cx="1231.3" cy="339.6" r="1.3" fill="none" stroke="#555" stroke-width="0.8"/>
</g>
<!-- panel icon 2 -->
<g fill="none" stroke="#222" stroke-width="1.2" stroke-linejoin="round">
<path d="M1239.3,362.4 L1247.4,366.1 L1247.4,375.3 L1239.6,379.6 L1231.4,375.6 L1231.4,367.8 M1247.4,366.1 L1239.6,370.7 L1239.6,379.6 M1239.6,370.7 L1233,367.5"/>
</g>
<rect x="1227.1" y="359.1" width="10.8" height="8.8" fill="#2457c0"/>
<g fill="#6f9ae8"><rect x="1228.1" y="361.6" width="2.4" height="2.4"/><rect x="1231.4" y="361.6" width="2.4" height="2.4"/><rect x="1234.7" y="361.6" width="2.4" height="2.4"/><rect x="1228.1" y="364.8" width="2.4" height="2.4"/><rect x="1231.4" y="364.8" width="2.4" height="2.4"/><rect x="1234.7" y="364.8" width="2.4" height="2.4"/></g>
<!-- panel icon 3 -->
<g fill="none" stroke="#333" stroke-width="1.1" stroke-linejoin="round">
<path d="M1238.8,400.1 L1244.4,402.8 L1244.4,408.2 L1237.7,411.5 L1232.3,408.2 L1232.3,403.4 M1244.4,402.8 L1237.7,406 L1237.7,411.5 M1237.7,406 L1233,403.5"/>
<path d="M1231.5,403.5 C1229.5,403.5 1230,405 1230,407 C1230,408.5 1229.3,409 1228.3,409.1 C1229.3,409.2 1230,409.7 1230,411 C1230,413 1229.5,414.6 1231.5,414.6"/>
<path d="M1243.8,396.9 C1246.3,396.9 1245.8,399 1245.8,402 C1245.8,404.5 1246.5,405.6 1247.6,405.8 C1246.5,406 1245.8,407 1245.8,409.5 C1245.8,412.5 1246.3,414.6 1243.8,414.6"/>
</g>
<rect x="1227.1" y="395.3" width="10.8" height="8" fill="#444"/>
<g fill="#999"><rect x="1228.1" y="397.6" width="2.4" height="2.1"/><rect x="1231.4" y="397.6" width="2.4" height="2.1"/><rect x="1234.7" y="397.6" width="2.4" height="2.1"/><rect x="1228.1" y="400.5" width="2.4" height="2.1"/><rect x="1231.4" y="400.5" width="2.4" height="2.1"/><rect x="1234.7" y="400.5" width="2.4" height="2.1"/></g>
<!-- panel icon 4 -->
<g fill="none" stroke="#222" stroke-width="2" stroke-linecap="round">
<path d="M1230,439.3 C1227.4,442.5 1227.4,447 1230,450.3"/>
<path d="M1246,434.5 C1249.6,439 1249.6,445.5 1246,450.3"/>
</g>
<text x="1238.2" y="448.9" font-family="Liberation Serif, serif" font-style="italic" font-weight="bold" font-size="27" fill="#222" text-anchor="middle">x</text>
<rect x="1227.1" y="431.4" width="10.8" height="8.2" fill="#444"/>
<g fill="#999"><rect x="1228.1" y="433.8" width="2.4" height="2.1"/><rect x="1231.4" y="433.8" width="2.4" height="2.1"/><rect x="1234.7" y="433.8" width="2.4" height="2.1"/><rect x="1228.1" y="436.7" width="2.4" height="2.1"/><rect x="1231.4" y="436.7" width="2.4" height="2.1"/><rect x="1234.7" y="436.7" width="2.4" height="2.1"/></g>

<!-- bottom icons -->
<g fill="none" stroke="#333" stroke-width="1.2" stroke-linejoin="round">
<path d="M1153.5,693.6 L1153.5,696.6 L1147.4,696.6 L1147.4,702.2 L1160.5,702.2 C1162.5,702.2 1164.1,700.5 1164.1,698.8 L1164.1,693.6" fill="#fff"/>
<ellipse cx="1158.8" cy="693.6" rx="5.3" ry="2.9" fill="#fff"/>
<ellipse cx="1158.8" cy="693.6" rx="2.6" ry="1.1" stroke-width="1.1"/>
<path d="M1147.4,697 L1159,697 C1161.5,697 1163.3,696 1164,694.5" stroke-width="1"/>
<path d="M1149.6,702 V700 M1151.8,702 V700.5 M1154,702 V700 M1156.2,702 V700.5 M1158.4,702 V700 M1160.6,701.8 V699.6 M1162.5,700.6 V698.6" stroke-width="0.7"/>
</g>
<g fill="none" stroke="#333" stroke-width="1.3" stroke-linejoin="round">
<path d="M1184.3,703.2 L1184.3,700.5 C1184.3,694.5 1189,689.7 1195,689.7 C1201,689.7 1205.7,694.5 1205.7,700.5 L1205.7,703.2 Z" fill="#fff"/>
<path d="M1184.3,701.2 H1205.7" stroke-width="0.9"/>
<path d="M1188.2,700.2 C1188.2,697 1191.2,694.5 1195,694.5 C1198.8,694.5 1201.8,697 1201.8,700.2 L1198.2,700.2 C1197.6,698.6 1196.5,698.2 1195,698.2 C1193.5,698.2 1192.4,698.6 1191.8,700.2 Z" stroke-width="1.1"/>
<path d="M1186,698.5 L1187,698.7 M1186.6,695.8 L1187.6,696.3 M1188,693.5 L1188.8,694.2 M1190.2,691.8 L1190.7,692.7 M1192.8,691 L1193,692 M1197.2,691 L1197,692 M1199.8,691.8 L1199.3,692.7 M1202,693.5 L1201.2,694.2 M1203.4,695.8 L1202.4,696.3 M1204,698.5 L1203,698.7" stroke-width="0.7"/>
</g>
<g fill="none" stroke="#333" stroke-width="1.2">
<path d="M1227.1,688.5 H1239.3" stroke-width="1.3"/>
<path d="M1233.2,688.5 V702" stroke-width="1.4"/>
<path d="M1225.3,702.8 H1240.6" stroke-width="1.9"/>
<path d="M1228.4,688.8 L1226,697.5 M1228.4,688.8 L1230.8,697.5" stroke-width="1"/>
<path d="M1238,688.8 L1235.6,697.5 M1238,688.8 L1240.4,697.5" stroke-width="1"/>
<path d="M1225.3,698 H1231.4 M1235,698 H1241" stroke-width="1.7"/>
</g>
</svg>
<!--/RIGHT-->
<div id="bot"><div id="tab"><span>Assembly 1</span></div></div>
</body></html>
